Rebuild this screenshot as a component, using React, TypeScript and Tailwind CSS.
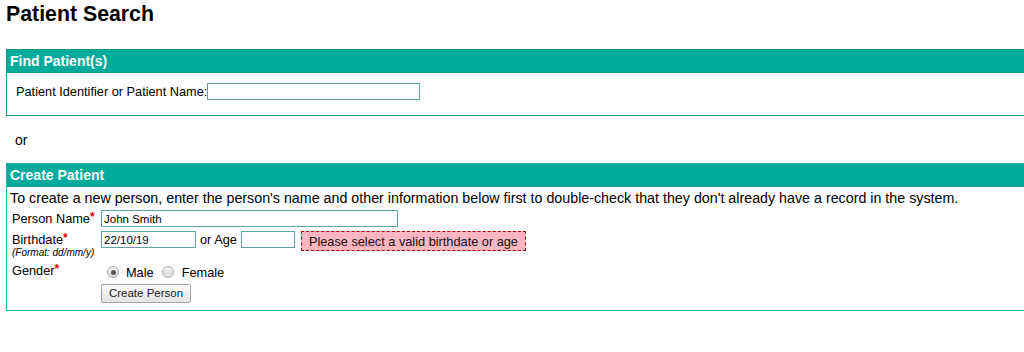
import React from "react";

function Radio({ checked }: { checked?: boolean }) {
  return (
    <span className="relative inline-block w-[12px] h-[12px] rounded-full border border-[#a9a9a9] bg-[linear-gradient(#f4f4f4,#d9d9d9)] shrink-0">
      {checked && (
        <span className="absolute left-[2.5px] top-[2.5px] w-[5px] h-[5px] rounded-full bg-[#555]" />
      )}
    </span>
  );
}

function Req() {
  return <span className="text-[#e00] text-[12px] font-bold align-top relative top-[-1px]">*</span>;
}

export default function App() {
  return (
    <div className="w-[1024px] h-[352px] overflow-hidden bg-white text-black font-['Liberation_Sans',Arial,sans-serif]">
      <h1 className="text-[21.3px] font-bold leading-[24px] pt-[2px] pl-[6px]">Patient Search</h1>

      <div className="mt-[23px] ml-[6px] w-[1100px] border border-[#17998a]">
        <div className="h-[23px] bg-[#00ab9b] border-b border-[#0a9a8b] text-white font-bold text-[14px] leading-[22px] pl-[3px]">
          Find Patient(s)
        </div>
        <div className="h-[42px] flex items-center pl-[9px] pb-[5px] text-[12.75px]">
          <span>Patient Identifier or Patient Name:</span>
          <input
            className="w-[213px] h-[17px] border border-[#63a3a2] outline-none px-[2px] text-[11.5px]"
            defaultValue=""
          />
        </div>
      </div>

      <div className="mt-[16px] pl-[15px] text-[14px] leading-[16px]">or</div>

      <div className="mt-[15px] ml-[6px] w-[1100px] border border-[#25b3a3]">
        <div className="h-[23px] bg-[#00ab9b] border-b border-[#0a9a8b] text-white font-bold text-[14px] leading-[22px] pl-[3px]">
          Create Patient
        </div>
        <div className="pl-[3px] pt-[3px] text-[14.27px] leading-[16px]">
          To create a new person, enter the person's name and other information below first to double-check that they don't already have a record in the system.
        </div>
        <div className="grid grid-cols-[89px_auto] pl-[5px] pt-[4px] pb-[7px] text-[12.75px] leading-[15px] justify-start">
          <div className="flex items-center h-[17px]">
            Person Name<Req />
          </div>
          <div className="h-[17px]">
            <input
              className="w-[297px] h-[17px] border border-[#63a3a2] outline-none px-[2px] text-[11.5px] block"
              defaultValue="John Smith"
            />
          </div>

          <div className="mt-[4px]">
            <div className="flex items-center h-[17px]">
              Birthdate<Req />
            </div>
            <div className="italic text-[10px] leading-[10px]">(Format: dd/mm/y)</div>
          </div>
          <div className="mt-[4px] flex items-start">
            <input
              className="w-[95px] h-[17px] border border-[#63a3a2] outline-none px-[2px] text-[11.5px] block"
              defaultValue="22/10/19"
            />
            <span className="ml-[4px] h-[17px] flex items-center">or Age</span>
            <input
              className="ml-[4px] w-[54px] h-[17px] border border-[#63a3a2] outline-none px-[2px] text-[11.5px] block"
              defaultValue=""
            />
            <div className="ml-[6px] h-[20px] border border-dashed border-[#a00000] bg-[#ffb6c1] px-[7px] flex items-center text-[#111]">
              Please select a valid birthdate or age
            </div>
          </div>

          <div className="mt-[5px] leading-[15px]">
            Gender<Req />
          </div>
          <div className="mt-[6px] flex items-center pl-[6px] h-[16px]">
            <Radio checked />
            <span className="ml-[7px]">Male</span>
            <span className="ml-[8px] flex items-center"><Radio /></span>
            <span className="ml-[8px]">Female</span>
          </div>

          <div />
          <div className="mt-[4px]">
            <button className="h-[19px] w-[90px] border border-[#a6a6a6] rounded-[2px] bg-[linear-gradient(#fbfbfb,#e3e3e3)] text-[11.5px] leading-[17px] text-[#222]">
              Create Person
            </button>
          </div>
        </div>
      </div>
    </div>
  );
}
